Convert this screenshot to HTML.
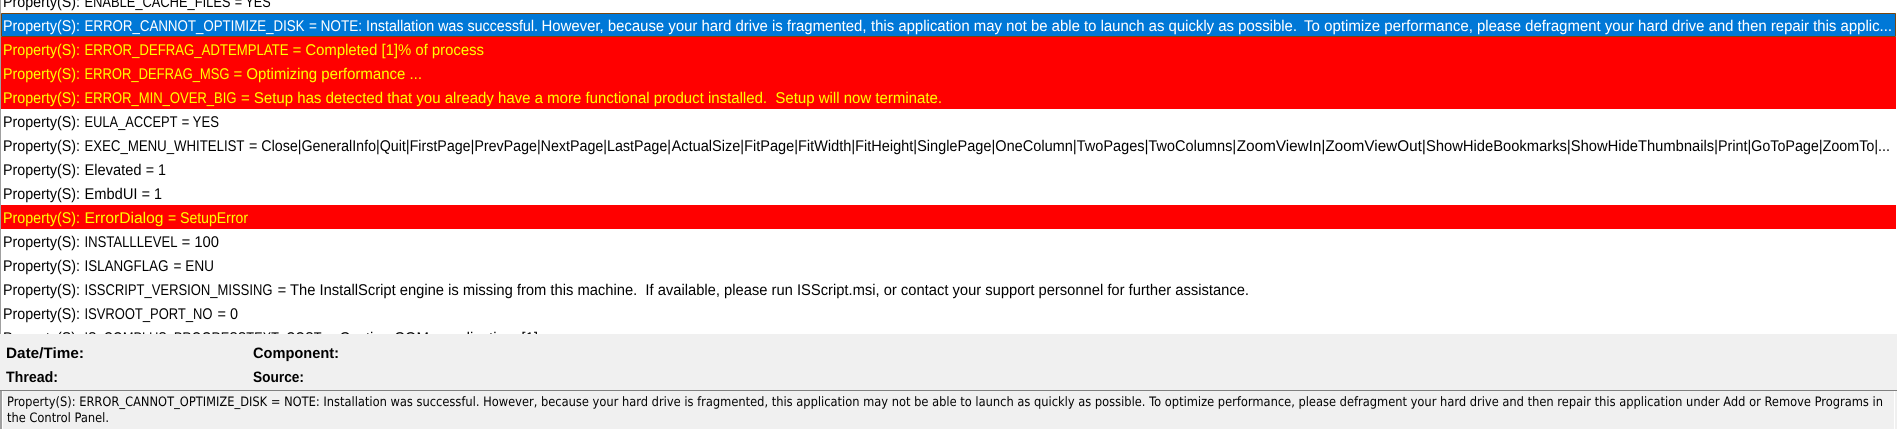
<!DOCTYPE html>
<html><head><meta charset="utf-8"><style>
html,body{margin:0;padding:0;background:#fff;width:1897px;height:429px;overflow:hidden}
svg{display:block}
text{white-space:pre;font-family:"Liberation Sans",sans-serif;font-size:15.5px;fill:#000;text-rendering:geometricPrecision}
.y text{fill:#ff0}.w text{fill:#fff}
text.b{font-weight:bold;font-size:15px;fill:#000}
text.t{font-family:"DejaVu Sans",sans-serif;font-size:13px}
</style></head><body>
<svg width="1897" height="429" viewBox="0 0 1897 429" xmlns="http://www.w3.org/2000/svg">
<rect width="1897" height="429" fill="#fff"/>
<rect x="1" y="13" width="1895" height="24" fill="#0078d7"/>
<rect x="1.5" y="13.5" width="1894" height="23" fill="none" stroke="#000" stroke-dasharray="1 1"/>
<rect x="1.5" y="13.5" width="1894" height="23" fill="none" stroke="#f08a1d" stroke-dasharray="1 1" stroke-dashoffset="1"/>
<rect x="1" y="37" width="1895" height="72" fill="#f00"/>
<rect x="1" y="205" width="1895" height="24" fill="#f00"/>

<g>
<text x="3" y="7" textLength="77" lengthAdjust="spacingAndGlyphs">Property(S):</text>
<text x="84.5" y="7" textLength="146" lengthAdjust="spacingAndGlyphs">ENABLE_CACHE_FILES</text>
<text x="234.7" y="7" textLength="36" lengthAdjust="spacingAndGlyphs">= YES</text>
</g>
<g class="w">
<text x="3" y="31" textLength="77" lengthAdjust="spacingAndGlyphs">Property(S):</text>
<text x="84.5" y="31" textLength="220" lengthAdjust="spacingAndGlyphs">ERROR_CANNOT_OPTIMIZE_DISK</text>
<text x="309" y="31" textLength="53" lengthAdjust="spacingAndGlyphs">= NOTE:</text>
<text x="366" y="31" textLength="172" lengthAdjust="spacingAndGlyphs">Installation was successful.</text>
<text x="541.5" y="31" textLength="325" lengthAdjust="spacingAndGlyphs">However, because your hard drive is fragmented,</text>
<text x="871" y="31" textLength="426" lengthAdjust="spacingAndGlyphs">this application may not be able to launch as quickly as possible.</text>
<text x="1304" y="31" textLength="169" lengthAdjust="spacingAndGlyphs">To optimize performance,</text>
<text x="1477" y="31" textLength="415" lengthAdjust="spacingAndGlyphs">please defragment your hard drive and then repair this applic...</text>
</g>
<g class="y">
<text x="3" y="55" textLength="77" lengthAdjust="spacingAndGlyphs">Property(S):</text>
<text x="84.5" y="55" textLength="204" lengthAdjust="spacingAndGlyphs">ERROR_DEFRAG_ADTEMPLATE</text>
<text x="292.6" y="55" textLength="191.4" lengthAdjust="spacingAndGlyphs">= Completed [1]% of process</text>
<text x="3" y="79" textLength="77" lengthAdjust="spacingAndGlyphs">Property(S):</text>
<text x="84.5" y="79" textLength="145" lengthAdjust="spacingAndGlyphs">ERROR_DEFRAG_MSG</text>
<text x="233.5" y="79" textLength="188.5" lengthAdjust="spacingAndGlyphs">= Optimizing performance ...</text>
<text x="3" y="103" textLength="77" lengthAdjust="spacingAndGlyphs">Property(S):</text>
<text x="84.5" y="103" textLength="152" lengthAdjust="spacingAndGlyphs">ERROR_MIN_OVER_BIG</text>
<text x="241" y="103" textLength="701" lengthAdjust="spacingAndGlyphs">= Setup has detected that you already have a more functional product installed.  Setup will now terminate.</text>
</g>
<g>
<text x="3" y="127" textLength="77" lengthAdjust="spacingAndGlyphs">Property(S):</text>
<text x="84.5" y="127" textLength="93" lengthAdjust="spacingAndGlyphs">EULA_ACCEPT</text>
<text x="181.6" y="127" textLength="37.4" lengthAdjust="spacingAndGlyphs">= YES</text>
<text x="3" y="151" textLength="77" lengthAdjust="spacingAndGlyphs">Property(S):</text>
<text x="84.5" y="151" textLength="160" lengthAdjust="spacingAndGlyphs">EXEC_MENU_WHITELIST</text>
<text x="249" y="151" textLength="422" lengthAdjust="spacingAndGlyphs">= Close|GeneralInfo|Quit|FirstPage|PrevPage|NextPage|LastPage|</text>
<text x="671.6" y="151" textLength="564.6" lengthAdjust="spacingAndGlyphs">ActualSize|FitPage|FitWidth|FitHeight|SinglePage|OneColumn|TwoPages|TwoColumns|</text>
<text x="1236.8" y="151" textLength="189" lengthAdjust="spacingAndGlyphs">ZoomViewIn|ZoomViewOut|</text>
<text x="1426" y="151" textLength="292" lengthAdjust="spacingAndGlyphs">ShowHideBookmarks|ShowHideThumbnails|</text>
<text x="1718" y="151" textLength="172" lengthAdjust="spacingAndGlyphs">Print|GoToPage|ZoomTo|...</text>
<text x="3" y="175" textLength="77" lengthAdjust="spacingAndGlyphs">Property(S):</text>
<text x="84.5" y="175" textLength="57" lengthAdjust="spacingAndGlyphs">Elevated</text>
<text x="145.7" y="175" textLength="20.3" lengthAdjust="spacingAndGlyphs">= 1</text>
<text x="3" y="199" textLength="77" lengthAdjust="spacingAndGlyphs">Property(S):</text>
<text x="84.5" y="199" textLength="53" lengthAdjust="spacingAndGlyphs">EmbdUI</text>
<text x="141.6" y="199" textLength="20.4" lengthAdjust="spacingAndGlyphs">= 1</text>
</g>
<g class="y">
<text x="3" y="223" textLength="77" lengthAdjust="spacingAndGlyphs">Property(S):</text>
<text x="84.5" y="223" textLength="79" lengthAdjust="spacingAndGlyphs">ErrorDialog</text>
<text x="168" y="223" textLength="80" lengthAdjust="spacingAndGlyphs">= SetupError</text>
</g>
<g>
<text x="3" y="247" textLength="77" lengthAdjust="spacingAndGlyphs">Property(S):</text>
<text x="84.5" y="247" textLength="93" lengthAdjust="spacingAndGlyphs">INSTALLLEVEL</text>
<text x="181.6" y="247" textLength="37.4" lengthAdjust="spacingAndGlyphs">= 100</text>
<text x="3" y="271" textLength="77" lengthAdjust="spacingAndGlyphs">Property(S):</text>
<text x="84.5" y="271" textLength="84" lengthAdjust="spacingAndGlyphs">ISLANGFLAG</text>
<text x="173.5" y="271" textLength="40.5" lengthAdjust="spacingAndGlyphs">= ENU</text>
<text x="3" y="295" textLength="77" lengthAdjust="spacingAndGlyphs">Property(S):</text>
<text x="84.5" y="295" textLength="188" lengthAdjust="spacingAndGlyphs">ISSCRIPT_VERSION_MISSING</text>
<text x="277.6" y="295" textLength="971.4" lengthAdjust="spacingAndGlyphs">= The InstallScript engine is missing from this machine.  If available, please run ISScript.msi, or contact your support personnel for further assistance.</text>
<text x="3" y="319" textLength="77" lengthAdjust="spacingAndGlyphs">Property(S):</text>
<text x="84.5" y="319" textLength="128" lengthAdjust="spacingAndGlyphs">ISVROOT_PORT_NO</text>
<text x="217.5" y="319" textLength="20.5" lengthAdjust="spacingAndGlyphs">= 0</text>
<text x="3" y="343" textLength="77" lengthAdjust="spacingAndGlyphs">Property(S):</text>
<text x="84.5" y="343" textLength="237" lengthAdjust="spacingAndGlyphs">IS_COMPLUS_PROGRESSTEXT_COST</text>
<text x="326.5" y="343" textLength="211.5" lengthAdjust="spacingAndGlyphs">= Costing COM+ application: [1]</text>
</g>

<rect x="0" y="0" width="1" height="334" fill="#a0a0a0"/>
<rect x="0" y="334" width="1897" height="95" fill="#f0f0f0"/>
<text class="b" x="6" y="358" textLength="78" lengthAdjust="spacingAndGlyphs">Date/Time:</text>
<text class="b" x="253" y="358" textLength="86" lengthAdjust="spacingAndGlyphs">Component:</text>
<text class="b" x="6" y="382" textLength="52" lengthAdjust="spacingAndGlyphs">Thread:</text>
<text class="b" x="253" y="382" textLength="51" lengthAdjust="spacingAndGlyphs">Source:</text>
<rect x="0" y="390" width="1897" height="1" fill="#808080"/>
<rect x="0" y="391" width="2" height="38" fill="#a0a0a0"/>
<rect x="2" y="391" width="1" height="38" fill="#fff"/>
<rect x="1894" y="391" width="1" height="38" fill="#fff"/>
<text class="t" x="7" y="406" textLength="1876" lengthAdjust="spacingAndGlyphs">Property(S): ERROR_CANNOT_OPTIMIZE_DISK = NOTE: Installation was successful. However, because your hard drive is fragmented, this application may not be able to launch as quickly as possible. To optimize performance, please defragment your hard drive and then repair this application under Add or Remove Programs in</text>
<text class="t" x="7" y="422" textLength="102" lengthAdjust="spacingAndGlyphs">the Control Panel.</text>
</svg>
</body></html>
